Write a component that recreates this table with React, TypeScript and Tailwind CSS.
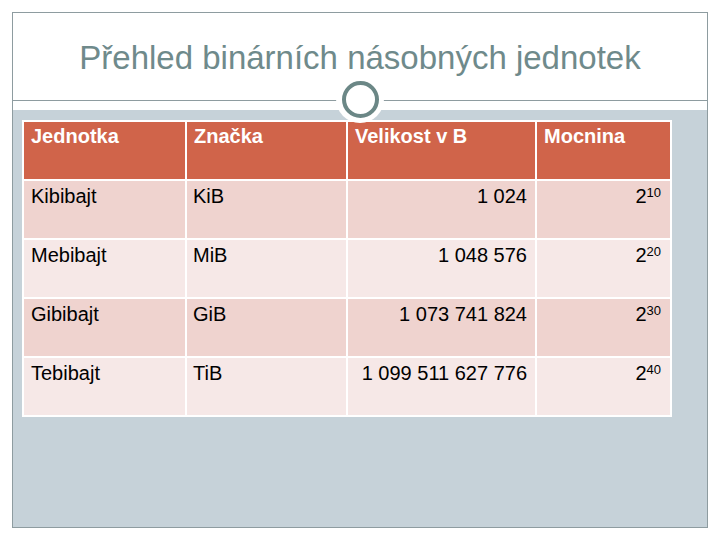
import React from "react";

const rows = [
  { name: "Kibibajt", sym: "KiB", size: "1 024", exp: "10", bg: "bg-[#efd3cf]" },
  { name: "Mebibajt", sym: "MiB", size: "1 048 576", exp: "20", bg: "bg-[#f6e8e7]" },
  { name: "Gibibajt", sym: "GiB", size: "1 073 741 824", exp: "30", bg: "bg-[#efd3cf]" },
  { name: "Tebibajt", sym: "TiB", size: "1 099 511 627 776", exp: "40", bg: "bg-[#f6e8e7]" },
];

export default function App() {
  return (
    <div
      className="w-[720px] h-[540px] bg-white overflow-hidden"
      style={{ fontFamily: '"Liberation Sans", Arial, sans-serif' }}
    >
      <div className="relative ml-[12px] mt-[12px] w-[696px] h-[516px] border border-[#8e9ca0] flex flex-col">
        <div className="h-[88px] border-b border-[#8e9ca0] flex justify-center">
          <h1 className="mt-[26px] text-[33px] leading-[37px] text-[#6f8a8b] whitespace-nowrap">
            Přehled binárních násobných jednotek
          </h1>
        </div>
        <div className="h-[9px]" />
        <div className="flex-1 bg-[#c6d2d9] pl-[9px] pt-[10px]">
          <div className="w-[650px] bg-white p-[2px] grid grid-cols-[161px_159px_187px_133px] auto-rows-[57px] gap-[2px] text-[20px] leading-[24px]">
            {["Jednotka", "Značka", "Velikost v B", "Mocnina"].map((h) => (
              <div key={h} className="bg-[#d0644a] text-white font-bold pl-[7px] pt-[2px]">
                {h}
              </div>
            ))}
            {rows.map((r) => (
              <React.Fragment key={r.name}>
                <div className={`${r.bg} text-black pl-[7px] pt-[3px]`}>{r.name}</div>
                <div className={`${r.bg} text-black pl-[6px] pt-[3px]`}>{r.sym}</div>
                <div className={`${r.bg} text-black pr-[8px] pt-[3px] text-right`}>{r.size}</div>
                <div className={`${r.bg} text-black pr-[9px] pt-[3px] text-right`}>
                  2<sup className="text-[13px]">{r.exp}</sup>
                </div>
              </React.Fragment>
            ))}
          </div>
        </div>
        <div className="absolute left-[323px] top-[62px] w-[48px] h-[48px] rounded-full bg-white flex items-center justify-center">
          <div className="w-[37px] h-[37px] rounded-full border-[4px] border-[#6b8786] bg-white" />
        </div>
      </div>
    </div>
  );
}
